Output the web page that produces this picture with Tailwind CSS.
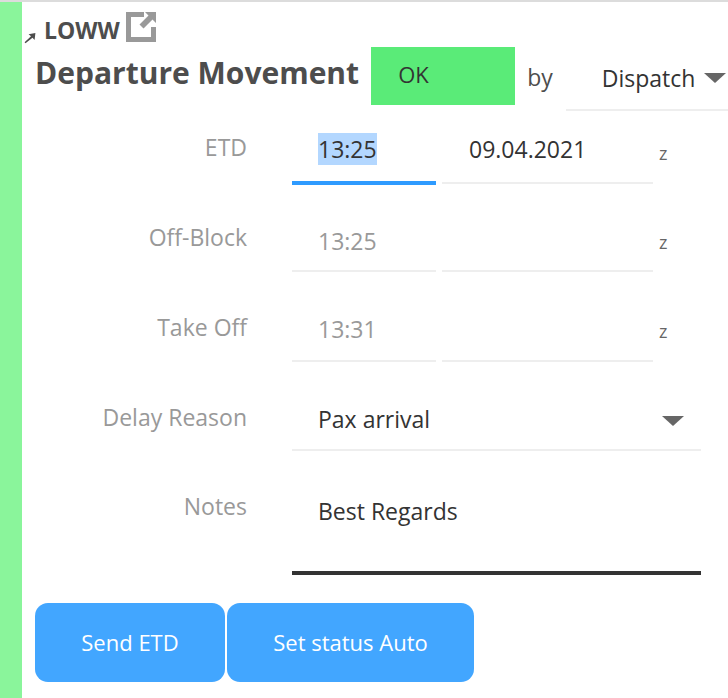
<!DOCTYPE html>
<html lang="en">
<head>
  <meta charset="UTF-8" />
  <meta name="viewport" content="width=device-width, initial-scale=1" />
  <title>Departure Movement</title>
  <script src="https://cdn.jsdelivr.net/npm/@tailwindcss/browser@4"></script>
</head>
<body class="bg-white font-['Open_Sans',sans-serif] text-[#333] overflow-hidden">
  <div class="flex h-[698px] w-[728px] border-t-2 border-[#dcdcdc]">
    <div class="w-[22px] shrink-0 bg-[#8af59b]"></div>
    <div class="flex-1 flex flex-col min-w-0">

      <!-- station -->
      <div class="h-[43px] flex items-end">
        <svg class="w-[12px] h-[12px] ml-[2px] mb-[1px]" viewBox="0 0 12 12" fill="#4d4d4d">
          <path d="M1.5 11.2 L0.6 10.2 L7 4.2 L4.6 2.2 L11.4 1 L10.6 8 L8.5 5.7 Z" />
        </svg>
        <span class="ml-[8px] text-[23px] leading-[30px] font-bold text-[#4d4d4d]">LOWW</span>
        <svg class="w-[30px] h-[30px] ml-[6px] mb-[3px] blur-[0.6px]" viewBox="0 0 30 30" fill="#999">
          <path d="M0 0H18V5H5V25H25V15H30V30H0Z" />
          <path d="M19 0H30V11L26.5 7.5L17.5 16.5L13.5 12.5L22.5 3.5Z" />
        </svg>
      </div>

      <!-- title -->
      <div class="h-[67px] flex items-start pl-[13px]">
        <h1 class="text-[30px] leading-[56px] font-bold text-[#4d4d4d] whitespace-nowrap">Departure Movement</h1>
        <div class="ml-[12px] mt-[2px] w-[144px] h-[58px] bg-[#5aeb78] pl-[27px] text-[22px] leading-[54px]">OK</div>
        <span class="ml-[12px] mt-[2px] text-[23px] leading-[60px] text-[#4d4d4d]">by</span>
        <div class="ml-[13px] mt-[2px] flex-1 h-[64px] border-b-2 border-[#eeeeee] flex items-center pl-[36px] text-[23px] whitespace-nowrap">
          <span>Dispatch</span>
          <span class="ml-[9px] w-0 h-0 border-x-[11px] border-x-transparent border-t-[10px] border-t-[#666]"></span>
        </div>
      </div>

      <!-- ETD -->
      <div class="h-[73px] flex">
        <div class="w-[225px] text-right text-[23px] leading-[30px] pt-[20px] text-[#999]">ETD</div>
        <div class="ml-[45px] w-[144px] h-[73px] border-b-[4px] border-[#2e9bff] pl-[26px] pt-[21px] text-[23px] leading-[32px]"><span class="bg-[#b3d7ff] inline-block">13:25</span></div>
        <div class="ml-[6px] w-[211px] h-[72px] border-b-2 border-[#eeeeee] pl-[27px] pt-[21px] text-[23px] leading-[32px]">09.04.2021</div>
        <span class="ml-[6px] pt-[28px] text-[18px] leading-[26px] text-[#666]">z</span>
      </div>

      <!-- Off-Block -->
      <div class="h-[87px] flex">
        <div class="w-[225px] text-right text-[23px] leading-[30px] pt-[37px] text-[#999]">Off-Block</div>
        <div class="ml-[45px] w-[144px] h-[87px] border-b-2 border-[#eeeeee] pl-[26px] pt-[40px] text-[23px] leading-[32px] text-[#999]">13:25</div>
        <div class="ml-[6px] w-[211px] h-[87px] border-b-2 border-[#eeeeee]"></div>
        <span class="ml-[6px] pt-[44px] text-[18px] leading-[26px] text-[#666]">z</span>
      </div>

      <!-- Take Off -->
      <div class="h-[90px] flex">
        <div class="w-[225px] text-right text-[23px] leading-[30px] pt-[40px] text-[#999]">Take Off</div>
        <div class="ml-[45px] w-[144px] h-[90px] border-b-2 border-[#eeeeee] pl-[26px] pt-[41px] text-[23px] leading-[32px] text-[#999]">13:31</div>
        <div class="ml-[6px] w-[211px] h-[90px] border-b-2 border-[#eeeeee]"></div>
        <span class="ml-[6px] pt-[46px] text-[18px] leading-[26px] text-[#666]">z</span>
      </div>

      <!-- Delay Reason -->
      <div class="h-[89px] flex">
        <div class="w-[225px] text-right text-[23px] leading-[30px] pt-[40px] text-[#999]">Delay Reason</div>
        <div class="ml-[45px] w-[409px] h-[89px] border-b-2 border-[#eeeeee] flex justify-between pl-[26px] pr-[17px] pt-[41px] text-[23px] leading-[32px]">
          <span>Pax arrival</span>
          <span class="mt-[13px] w-0 h-0 border-x-[11px] border-x-transparent border-t-[10px] border-t-[#666]"></span>
        </div>
      </div>

      <!-- Notes -->
      <div class="h-[124px] flex">
        <div class="w-[225px] text-right text-[23px] leading-[30px] pt-[40px] text-[#999]">Notes</div>
        <div class="ml-[45px] w-[409px] h-[124px] border-b-[4px] border-[#333] pl-[26px] pt-[44px] text-[23px] leading-[32px]">Best Regards</div>
      </div>

      <!-- actions -->
      <div class="mt-[28px] ml-[13px] flex gap-[2px] text-white text-[22px]">
        <button class="w-[190px] h-[79px] rounded-[13px] bg-[#42a6ff]">Send ETD</button>
        <button class="w-[247px] h-[79px] rounded-[13px] bg-[#42a6ff]">Set status Auto</button>
      </div>
    </div>
  </div>
</body>
</html>
